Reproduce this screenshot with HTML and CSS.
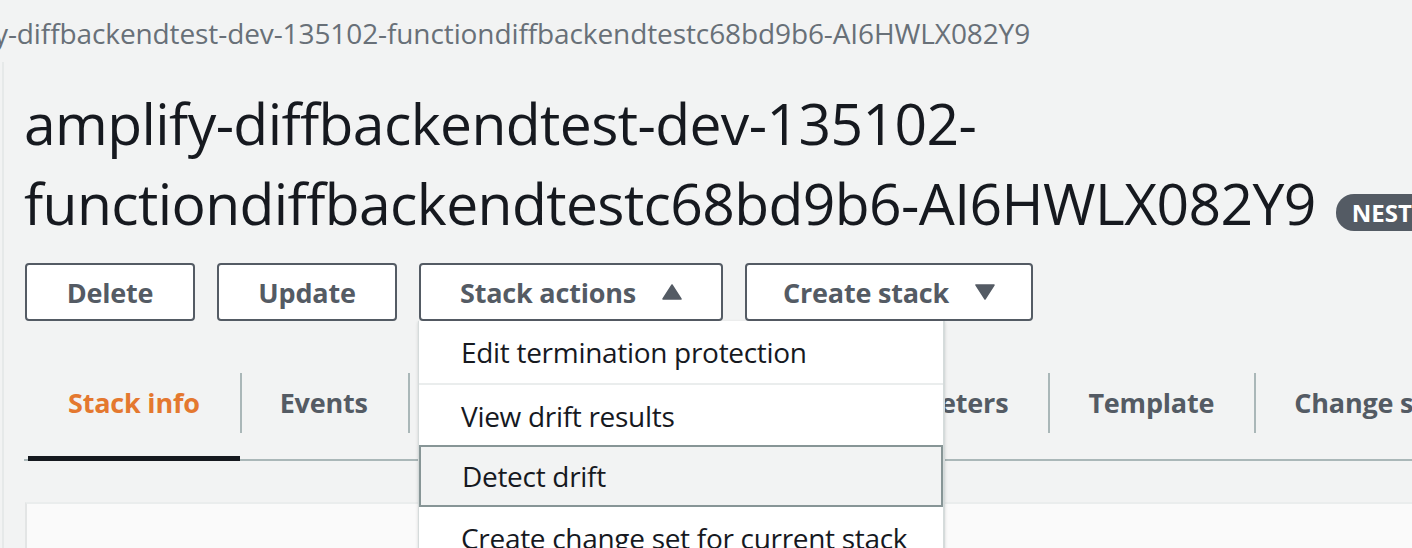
FILE: index.html
```html
<!DOCTYPE html>
<html>
<head>
<meta charset="utf-8">
<link rel="stylesheet" href="styles.css">
</head>
<body>
<div class="crumb">y-diffbackendtest-dev-135102-functiondiffbackendtestc68bd9b6-AI6HWLX082Y9</div>
<div class="main">
  <h1 class="title">amplify-diffbackendtest-dev-135102-<br>functiondiffbackendtestc68bd9b6-AI6HWLX082Y9<span class="badge">NESTED</span></h1>
  <div class="actions">
    <button class="btn btn-del">Delete</button>
    <button class="btn btn-upd">Update</button>
    <div class="dd">
      <button class="btn btn-dd">Stack actions <svg class="caret" viewBox="0 0 20 16"><path d="M10 1 L19 15 L1 15 Z" fill="#545b64" stroke="#545b64" stroke-width="1.5" stroke-linejoin="round"/></svg></button>
      <ul class="menu">
        <li class="item">Edit termination protection</li>
        <li class="item sep">View drift results</li>
        <li class="item hl">Detect drift</li>
        <li class="item">Create change set for current stack</li>
      </ul>
    </div>
    <button class="btn btn-dd btn-create">Create stack <svg class="caret" viewBox="0 0 20 16"><path d="M1 1 L19 1 L10 15 Z" fill="#545b64" stroke="#545b64" stroke-width="1.5" stroke-linejoin="round"/></svg></button>
  </div>
  <div class="tabs">
    <div class="tab active">Stack info</div>
    <div class="tab">Events</div>
    <div class="tab">Resources</div>
    <div class="tab">Outputs</div>
    <div class="tab">Parameters</div>
    <div class="tab">Template</div>
    <div class="tab">Change sets</div>
  </div>
  <div class="panel"></div>
</div>
</body>
</html>
```
FILE: styles.css
```css
* { box-sizing: border-box; }
html, body { margin: 0; padding: 0; }
body {
  background: #f2f3f3;
  font-family: "Open Sans", "Noto Sans", sans-serif;
  width: 1412px;
  height: 548px;
  overflow: hidden;
}
.crumb {
  height: 62px;
  line-height: 66px;
  font-size: 28px;
  color: #687078;
  margin-left: -6px;
  white-space: nowrap;
  letter-spacing: -0.1px;
}
.main {
  margin-left: 2px;
  border-left: 2px solid #e6e9e9;
  padding-left: 20px;
  padding-top: 21px;
  width: 1500px;
}
.title {
  margin: 0;
  font-size: 57px;
  font-weight: 400;
  line-height: 80px;
  color: #16191f;
  white-space: nowrap;
  letter-spacing: -0.6px;
}
.badge {
  display: inline-block;
  vertical-align: 3px;
  margin-left: 20px;
  height: 37px;
  line-height: 37px;
  padding: 0 16px;
  border-radius: 18px;
  background: #545b64;
  color: #fff;
  font-size: 24px;
  font-weight: 700;
  letter-spacing: 0;
}
.actions {
  display: flex;
  gap: 22px;
  margin-top: 20px;
  margin-left: 1px;
}
.btn {
  height: 58px;
  border: 2px solid #545b64;
  border-radius: 4px;
  background: #fff;
  color: #545b64;
  font-family: inherit;
  font-size: 27px;
  font-weight: 700;
  padding: 0 40px;
  display: flex;
  align-items: center;
  justify-content: center;
  gap: 26px;
  letter-spacing: -0.2px;
}
.btn-del { width: 170px; padding: 0; }
.btn-upd { width: 180px; padding: 0; }
.btn-create { width: 288px; padding: 0; }
.caret { width: 20px; height: 16px; }
.dd { position: relative; }
.dd .btn { width: 304px; padding: 0; }
.menu {
  position: absolute;
  left: -1px;
  top: 58px;
  width: 527px;
  margin: 0;
  padding: 0;
  list-style: none;
  background: #fff;
  border-left: 1px solid #d5dbdb;
  border-right: 2px solid #d5dbdb;
  box-shadow: 0 1px 3px rgba(0,0,0,0.15);
  z-index: 10;
}
.item {
  height: 62px;
  line-height: 62px;
  padding-left: 42px;
  font-size: 28px;
  color: #16191f;
  letter-spacing: -0.3px;
  white-space: nowrap;
}
.item.sep { border-top: 2px solid #eaeded; height: 62px; }
.item.hl {
  background: #f2f3f3;
  border: 2px solid #879596;
  line-height: 58px;
  padding-left: 41px;
}
.tabs {
  display: flex;
  margin-top: 50px;
  border-bottom: 2px solid #aab7b8;
  padding-left: 4px;
  height: 90px;
}
.tab {
  padding: 0 40px 26px;
  font-size: 27px;
  font-weight: 700;
  color: #545b64;
  display: flex;
  align-items: center;
  position: relative;
  white-space: nowrap;
  letter-spacing: -0.2px;
}
.tab + .tab::before {
  content: "";
  position: absolute;
  left: 0;
  top: 2px;
  height: 60px;
  border-left: 2px solid #aab7b8;
}
.tab.active { color: #e4782f; }
.tab.active::after {
  content: "";
  position: absolute;
  left: 0;
  right: 0;
  bottom: -2px;
  height: 5px;
  background: #16191f;
}
.panel {
  margin-top: 41px;
  margin-left: 1px;
  height: 200px;
  background: #fafafa;
  border-top: 2px solid #eaeded;
  border-left: 2px solid #e3e5e5;
}
```
